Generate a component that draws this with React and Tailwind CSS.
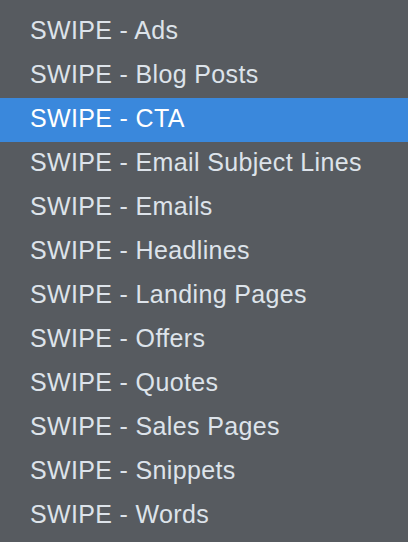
import React from 'react';

const items = [
    'Ad Copy',
    'SWIPE - Ads',
    'SWIPE - Blog Posts',
    'SWIPE - CTA',
    'SWIPE - Email Subject Lines',
    'SWIPE - Emails',
    'SWIPE - Headlines',
    'SWIPE - Landing Pages',
    'SWIPE - Offers',
    'SWIPE - Quotes',
    'SWIPE - Sales Pages',
    'SWIPE - Snippets',
    'SWIPE - Words',
];

export default function App() {
    const selected = 'SWIPE - CTA';

    return (
        <div className="w-[408px] h-[542px] overflow-hidden bg-[#575b60] font-['Liberation_Sans',Arial,sans-serif]">
            {/* list is scrolled, first row mostly hidden */}
            <ul className="-mt-[34px]">
                {items.map((item) => {
                    const active = item === selected;
                    return (
                        <li
                            key={item}
                            className={`h-[44px] flex items-center pl-[30px] pb-[3px] text-[25px] tracking-[0.35px] leading-none whitespace-nowrap ${active ? 'bg-[#3a88dc] text-white' : 'text-[#dde3ea]'}`}
                        >
                            {item}
                        </li>
                    );
                })}
            </ul>
        </div>
    );
}
